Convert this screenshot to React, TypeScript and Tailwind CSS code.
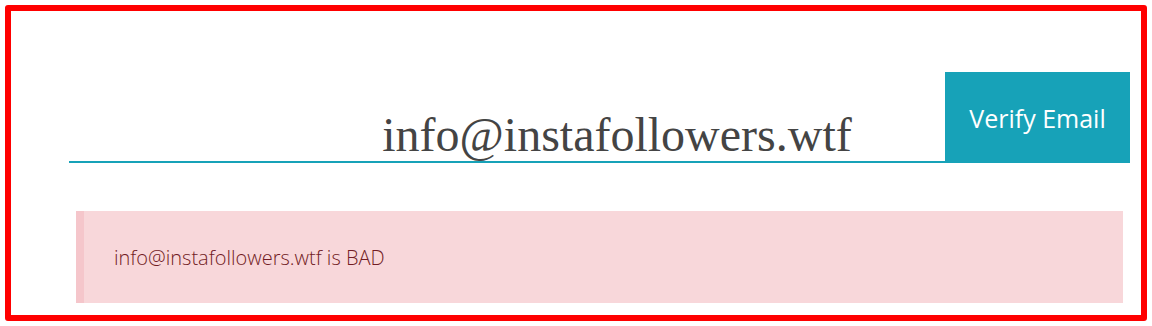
export default function App() {
  return (
    <div className="w-[1152px] h-[326px] bg-white p-[5px]">
      <div className="h-full rounded-[3px] border-[6px] border-[#ff0000] bg-white flex flex-col pt-[61px]">
        <div className="ml-[58px] mr-[11px] h-[91px] flex">
          <input
            readOnly
            value="info@instafollowers.wtf"
            className="flex-1 min-w-0 h-full border-b-2 border-[#17a2b8] bg-transparent pt-[35px] pl-[220px] text-center text-[48px] leading-none text-[#444444] outline-none"
            style={{ fontFamily: '"Liberation Serif", "Times New Roman", serif' }}
          />
          <button
            className="w-[185px] h-full bg-[#17a2b8] pt-[3px] text-white text-[25px]"
            style={{ fontFamily: '"Open Sans", "Noto Sans", sans-serif' }}
          >
            Verify Email
          </button>
        </div>
        <div
          className="mt-[48px] ml-[65px] mr-[18px] h-[92px] flex items-center border-l-8 border-[#f5c6cb] bg-[#f8d7da] pl-[30px] pt-[2px] text-[20px] font-light text-[#721c24]"
          style={{ fontFamily: '"Open Sans", "Noto Sans", sans-serif' }}
        >
          info@instafollowers.wtf is BAD
        </div>
      </div>
    </div>
  );
}
